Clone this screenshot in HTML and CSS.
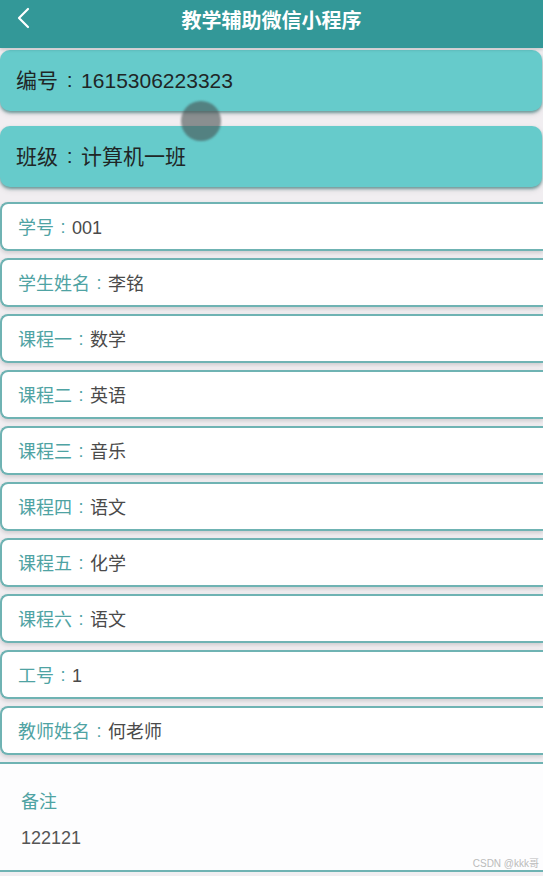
FILE: index.html
```html
<!DOCTYPE html>
<html lang="zh-CN">
<head>
<meta charset="utf-8">
<link rel="stylesheet" href="styles.css">
</head>
<body>
<div class="page">
  <header class="nav">
    <svg class="back" width="14" height="22" viewBox="0 0 14 22"><path d="M12 2 L3 11 L12 20" fill="none" stroke="#fff" stroke-width="2.2" stroke-linecap="round" stroke-linejoin="round"/></svg>
    <div class="title">教学辅助微信小程序</div>
  </header>
  <main class="content">
    <div class="hero"><span class="line">编号<span class="c">:</span>1615306223323</span></div>
    <div class="hero"><span class="line">班级<span class="c">:</span>计算机一班</span></div>
    <div class="rows">
      <div class="row"><span class="line"><span class="k">学号<span class="c">:</span></span><span class="v">001</span></span></div>
      <div class="row"><span class="line"><span class="k">学生姓名<span class="c">:</span></span><span class="v">李铭</span></span></div>
      <div class="row"><span class="line"><span class="k">课程一<span class="c">:</span></span><span class="v">数学</span></span></div>
      <div class="row"><span class="line"><span class="k">课程二<span class="c">:</span></span><span class="v">英语</span></span></div>
      <div class="row"><span class="line"><span class="k">课程三<span class="c">:</span></span><span class="v">音乐</span></span></div>
      <div class="row"><span class="line"><span class="k">课程四<span class="c">:</span></span><span class="v">语文</span></span></div>
      <div class="row"><span class="line"><span class="k">课程五<span class="c">:</span></span><span class="v">化学</span></span></div>
      <div class="row"><span class="line"><span class="k">课程六<span class="c">:</span></span><span class="v">语文</span></span></div>
      <div class="row"><span class="line"><span class="k">工号<span class="c">:</span></span><span class="v">1</span></span></div>
      <div class="row"><span class="line"><span class="k">教师姓名<span class="c">:</span></span><span class="v">何老师</span></span></div>
    </div>
    <div class="note">
      <div class="note-k">备注</div>
      <div class="note-v">122121</div>
    </div>
  </main>
  <div class="touch"></div>
  <div class="mark">CSDN @kkk哥</div>
</div>
</body>
</html>
```
FILE: styles.css
```css
* { box-sizing: border-box; }
html, body { margin: 0; padding: 0; }
body {
  background: #f1eef1;
  font-family: "Liberation Sans", "Noto Sans CJK SC", sans-serif;
  width: 543px;
  height: 876px;
  overflow: hidden;
}
.page { position: relative; width: 543px; height: 876px; overflow: hidden; }
.nav {
  height: 48px;
  background: #339898;
  display: flex;
  align-items: center;
  justify-content: center;
  position: relative;
  box-shadow: 0 2px 3px rgba(0,0,0,0.15);
  z-index: 2;
}
.back { position: absolute; left: 16px; top: 7px; }
.title {
  color: #fff;
  font-family: "Noto Sans CJK SC", sans-serif;
  font-size: 20px;
  font-weight: 700;
  margin-top: -9px;
}
.line { display: block; line-height: 1.4; }
.c {
  display: inline-block;
  width: 1em;
  text-align: center;
  vertical-align: 0.04em;
  font-family: "Liberation Sans", sans-serif;
}
.content { display: flex; flex-direction: column; }
.hero {
  margin-top: 2px;
  margin-bottom: 14px;
  height: 61px;
  background: #66cbcb;
  border-radius: 10px;
  margin-right: 1px;
  box-shadow: 0 2px 3px rgba(40,110,110,0.6), 0 3px 6px rgba(0,0,0,0.1);
  display: flex;
  align-items: center;
  padding-left: 16px;
  font-size: 21px;
  color: #1f2626;
}
.hero .c { width: 1.1em; }
.hero + .hero { margin-top: 1px; margin-bottom: 15px; }
.rows { display: flex; flex-direction: column; gap: 7px; }
.row {
  height: 49px;
  background: #fff;
  border: 2px solid #6fb3b3;
  border-right: none;
  border-radius: 8px 0 0 8px;
  box-shadow: 0 2px 4px rgba(0,0,0,0.15);
  display: flex;
  align-items: center;
  padding: 3px 0 0 16px;
  font-size: 18px;
}
.k { color: #4fa3a3; }
.v { color: #4a4a4a; }
.note {
  margin-top: 7px;
  height: 110px;
  background: #fdfdfe;
  border-top: 2px solid #6fb3b3;
  border-bottom: 2px solid #6fb3b3;
  padding: 24px 0 0 21px;
}
.note-k { color: #4fa3a3; font-size: 18px; line-height: 24px; font-family: "Noto Sans CJK SC", sans-serif; }
.note-v { color: #555; font-size: 18px; line-height: 24px; margin-top: 14px; }
.touch {
  position: absolute;
  left: 181px;
  top: 101px;
  width: 40px;
  height: 40px;
  border-radius: 50%;
  background: rgba(70,80,80,0.6);
  filter: blur(1px);
  z-index: 3;
}
.mark {
  position: absolute;
  right: 4px;
  bottom: 6px;
  font-family: "Liberation Sans", "Noto Sans CJK SC", sans-serif;
  font-size: 10px;
  color: #bbb;
}
```
